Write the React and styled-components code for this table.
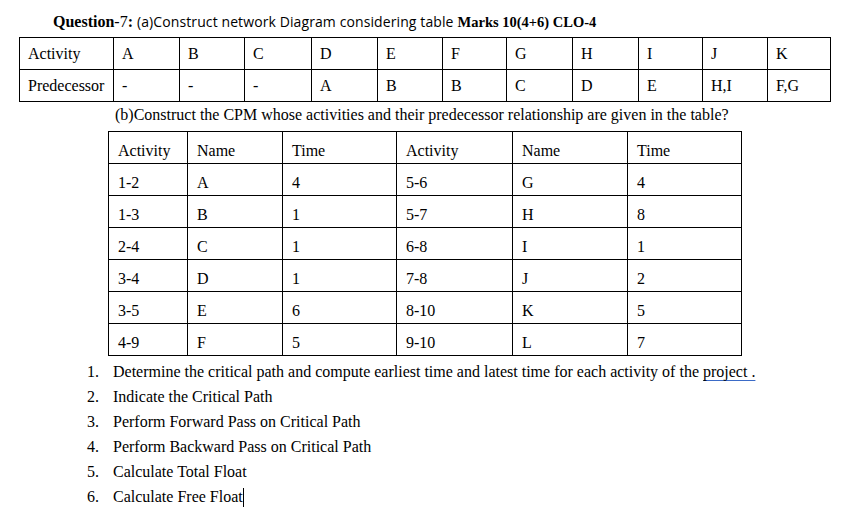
import React from "react";
import styled, { createGlobalStyle } from "styled-components";

const GlobalStyle = createGlobalStyle`
    body {
        margin: 0;
        background: #fff;
        color: #000;
        font-family: "Liberation Serif", "Times New Roman", serif;
        font-size: 16px;
    }
`;

const Page = styled.div`
    width: 867px;
    height: 515px;
    overflow: hidden;
    display: flex;
    flex-direction: column;
    align-items: flex-start;
`;

const Title = styled.div`
    margin: 12px 0 0 53px;
    line-height: 20px;
    white-space: nowrap;
`;

const Sans = styled.span`
    font-family: "Open Sans", "Liberation Sans", sans-serif;
    font-size: 14px;
    letter-spacing: 0.1px;
`;

const Strong = styled.b`
    font-size: ${(p) => p.$size || 16}px;
`;

const Grid = styled.table`
    border-collapse: collapse;
    margin-left: ${(p) => p.$left}px;
    margin-top: ${(p) => p.$top}px;
    table-layout: fixed;
`;

const Cell = styled.td`
    border: 1px solid #000;
    height: ${(p) => p.$h}px;
    width: ${(p) => p.$w}px;
    padding: ${(p) => p.$pad};
    box-sizing: border-box;
    vertical-align: middle;
    line-height: 18px;
    white-space: nowrap;
`;

const Subtitle = styled.div`
    margin: 3px 0 0 115px;
    line-height: 20px;
    white-space: nowrap;
`;

const List = styled.ol`
    list-style: none;
    margin: 3px 0 0 87px;
    padding: 0;
`;

const Item = styled.li`
    display: grid;
    grid-template-columns: 26px auto;
    line-height: 25px;
    white-space: nowrap;
`;

const Marked = styled.span`
    text-decoration: underline;
    text-decoration-color: #3b6bc7;
    text-underline-offset: 3px;
`;

const Caret = styled.span`
    display: inline-block;
    width: 1px;
    height: 19px;
    background: #000;
    vertical-align: -5px;
`;

const acts = ["A", "B", "C", "D", "E", "F", "G", "H", "I", "J", "K"];
const preds = ["-", "-", "-", "A", "B", "B", "C", "D", "E", "H,I", "F,G"];
const widths1 = [94, 66, 65, 67, 66, 65, 64, 66, 66, 64, 65, 63];

const widths2 = [79, 95, 114, 116, 115, 114];
const cpm = [
    ["Activity", "Name", "Time", "Activity", "Name", "Time"],
    ["1-2", "A", "4", "5-6", "G", "4"],
    ["1-3", "B", "1", "5-7", "H", "8"],
    ["2-4", "C", "1", "6-8", "I", "1"],
    ["3-4", "D", "1", "7-8", "J", "2"],
    ["3-5", "E", "6", "8-10", "K", "5"],
    ["4-9", "F", "5", "9-10", "L", "7"],
];

const tasks = [
    "Indicate the Critical Path",
    "Perform Forward Pass on Critical Path",
    "Perform Backward Pass on Critical Path",
    "Calculate Total Float",
];

export default function App() {
    return (
        <Page>
            <GlobalStyle />
            <Title>
                <Strong>Question</Strong>-7<Strong>:</Strong>{" "}
                <Sans>(a)Construct network Diagram considering table</Sans>{" "}
                <Strong $size={14.5}>Marks 10(4+6) CLO-4</Strong>
            </Title>

            <Grid $left={19} $top={5}>
                <tbody>
                    <tr>
                        <Cell $w={widths1[0]} $h={32} $pad="0 8px">Activity</Cell>
                        {acts.map((a, i) => (
                            <Cell key={a} $w={widths1[i + 1]} $h={32} $pad="0 8px">{a}</Cell>
                        ))}
                    </tr>
                    <tr>
                        <Cell $w={widths1[0]} $h={32} $pad="0 8px">Predecessor</Cell>
                        {preds.map((p, i) => (
                            <Cell key={i} $w={widths1[i + 1]} $h={32} $pad="0 8px">{p}</Cell>
                        ))}
                    </tr>
                </tbody>
            </Grid>

            <Subtitle>
                (b)Construct the CPM whose activities and their predecessor relationship are given in the table?
            </Subtitle>

            <Grid $left={108} $top={6}>
                <tbody>
                    {cpm.map((row, r) => (
                        <tr key={r}>
                            {row.map((v, c) => (
                                <Cell key={c} $w={widths2[c]} $h={32} $pad="6px 9px 0">{v}</Cell>
                            ))}
                        </tr>
                    ))}
                </tbody>
            </Grid>

            <List>
                <Item>
                    <span>1.</span>
                    <span>
                        Determine the critical path and compute earliest time and latest time for each activity of the{" "}
                        <Marked>project .</Marked>
                    </span>
                </Item>
                {tasks.map((t, i) => (
                    <Item key={t}>
                        <span>{i + 2}.</span>
                        <span>{t}</span>
                    </Item>
                ))}
                <Item>
                    <span>6.</span>
                    <span>
                        Calculate Free Float<Caret />
                    </span>
                </Item>
            </List>
        </Page>
    );
}
